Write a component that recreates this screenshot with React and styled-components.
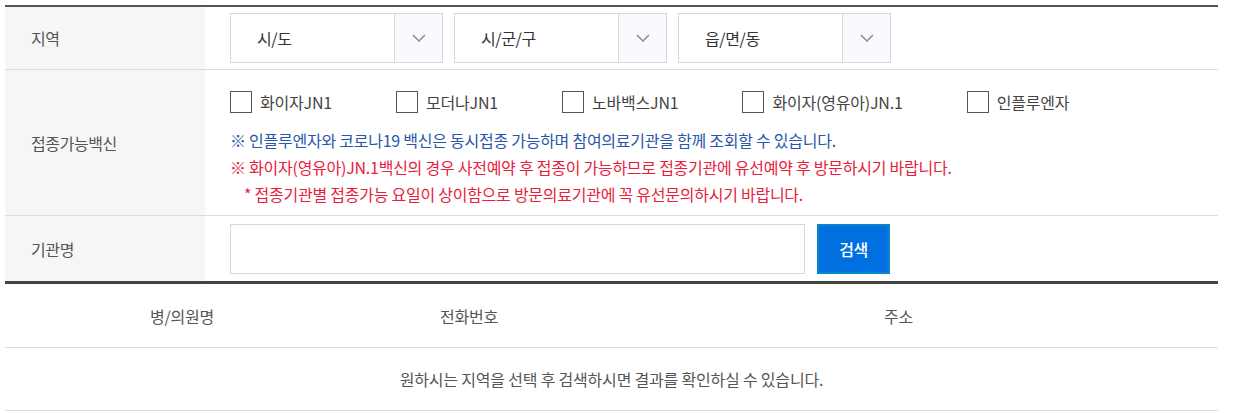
import React from "react";
import styled, { createGlobalStyle } from "styled-components";

const Global = createGlobalStyle`
  html, body { margin: 0; padding: 0; background: #fff; }
  body { font-family: "Noto Sans CJK KR", "Noto Sans", sans-serif; color: #444; }
  * { box-sizing: border-box; }
`;

const Page = styled.div`
  padding: 5px 18px 0 5px;
`;

const Form = styled.div`
  border-top: 2px solid #555;
`;

const Row = styled.div`
  display: grid;
  grid-template-columns: 200px 1fr;
  border-bottom: ${(p) => (p.$last ? "none" : "1px solid #dcdcdc")};
  min-height: ${(p) => p.$h}px;
`;

const Th = styled.div`
  background: #f6f6f6;
  display: flex;
  align-items: center;
  padding-left: 26px;
  font-size: 16px;
  color: #555;
  letter-spacing: -0.4px;
`;

const Td = styled.div`
  display: flex;
  flex-direction: ${(p) => (p.$col ? "column" : "row")};
  align-items: ${(p) => (p.$col ? "flex-start" : "center")};
  gap: ${(p) => p.$gap || 0}px;
  padding: ${(p) => p.$pad || "0 0 0 25px"};
`;

const Select = styled.div`
  width: 213px;
  height: 50px;
  border: 1px solid #d5d7de;
  display: flex;
  align-items: stretch;
  background: #fff;
`;

const SelectText = styled.div`
  flex: 1;
  display: flex;
  align-items: center;
  padding-left: 26px;
  font-size: 16px;
  color: #333;
  letter-spacing: -0.4px;
`;

const ArrowBox = styled.div`
  width: 48px;
  border-left: 1px solid #d5d7de;
  background: #f9fafd;
  display: flex;
  align-items: center;
  justify-content: center;
`;

const Checks = styled.div`
  display: flex;
  align-items: center;
  gap: 64px;
  margin-bottom: 13px;
`;

const CheckItem = styled.label`
  display: flex;
  align-items: center;
  gap: 8px;
  font-size: 16px;
  color: #444;
  letter-spacing: -0.2px;
`;

const Box = styled.span`
  width: 22px;
  height: 22px;
  border: 1px solid #555;
  background: #fff;
  display: inline-block;
`;

const Note = styled.p`
  margin: 0;
  font-size: 16px;
  line-height: 27px;
  letter-spacing: -0.25px;
  color: ${(p) => (p.$red ? "#e8203c" : "#2a56a8")};
  padding-left: ${(p) => p.$indent || 0}px;
`;

const Input = styled.div`
  width: 575px;
  height: 50px;
  border: 1px solid #d5d7de;
  background: #fff;
`;

const Button = styled.button`
  width: 73px;
  height: 50px;
  margin-left: 12px;
  background: #0070e0;
  border: 2px solid #0a84c8;
  color: #fff;
  font-family: inherit;
  font-size: 16px;
  font-weight: 500;
  letter-spacing: -0.4px;
  padding: 0;
`;

const Table = styled.div`
  border-top: 3px solid #444;
`;

const TRow = styled.div`
  display: grid;
  grid-template-columns: ${(p) => (p.$full ? "1fr" : "354px 220px 1fr")};
  height: ${(p) => p.$h}px;
  border-bottom: 1px solid #dcdcdc;
  align-items: center;
  text-align: center;
  font-size: 16px;
  color: #555;
  letter-spacing: -0.2px;
`;

const Chevron = () => (
  <svg width="14" height="8" viewBox="0 0 14 8" fill="none">
    <path d="M1 1l6 6 6-6" stroke="#8a8d94" strokeWidth="1.5" />
  </svg>
);

const selects = ["시/도", "시/군/구", "읍/면/동"];
const vaccines = ["화이자JN1", "모더나JN1", "노바백스JN1", "화이자(영유아)JN.1", "인플루엔자"];

export default function App() {
  return (
    <Page>
      <Global />
      <Form>
        <Row $h={63}>
          <Th>지역</Th>
          <Td $gap={11}>
            {selects.map((s) => (
              <Select key={s}>
                <SelectText>{s}</SelectText>
                <ArrowBox>
                  <Chevron />
                </ArrowBox>
              </Select>
            ))}
          </Td>
        </Row>
        <Row $h={146}>
          <Th>접종가능백신</Th>
          <Td $col $pad="20px 0 0 25px">
            <Checks>
              {vaccines.map((v) => (
                <CheckItem key={v}>
                  <Box />
                  {v}
                </CheckItem>
              ))}
            </Checks>
            <Note>※ 인플루엔자와 코로나19 백신은 동시접종 가능하며 참여의료기관을 함께 조회할 수 있습니다.</Note>
            <Note $red>※ 화이자(영유아)JN.1백신의 경우 사전예약 후 접종이 가능하므로 접종기관에 유선예약 후 방문하시기 바랍니다.</Note>
            <Note $red $indent={14}>* 접종기관별 접종가능 요일이 상이함으로 방문의료기관에 꼭 유선문의하시기 바랍니다.</Note>
          </Td>
        </Row>
        <Row $h={65} $last>
          <Th>기관명</Th>
          <Td>
            <Input />
            <Button>검색</Button>
          </Td>
        </Row>
      </Form>
      <Table>
        <TRow $h={64}>
          <div>병/의원명</div>
          <div>전화번호</div>
          <div>주소</div>
        </TRow>
        <TRow $h={63} $full>
          <div>원하시는 지역을 선택 후 검색하시면 결과를 확인하실 수 있습니다.</div>
        </TRow>
      </Table>
    </Page>
  );
}
